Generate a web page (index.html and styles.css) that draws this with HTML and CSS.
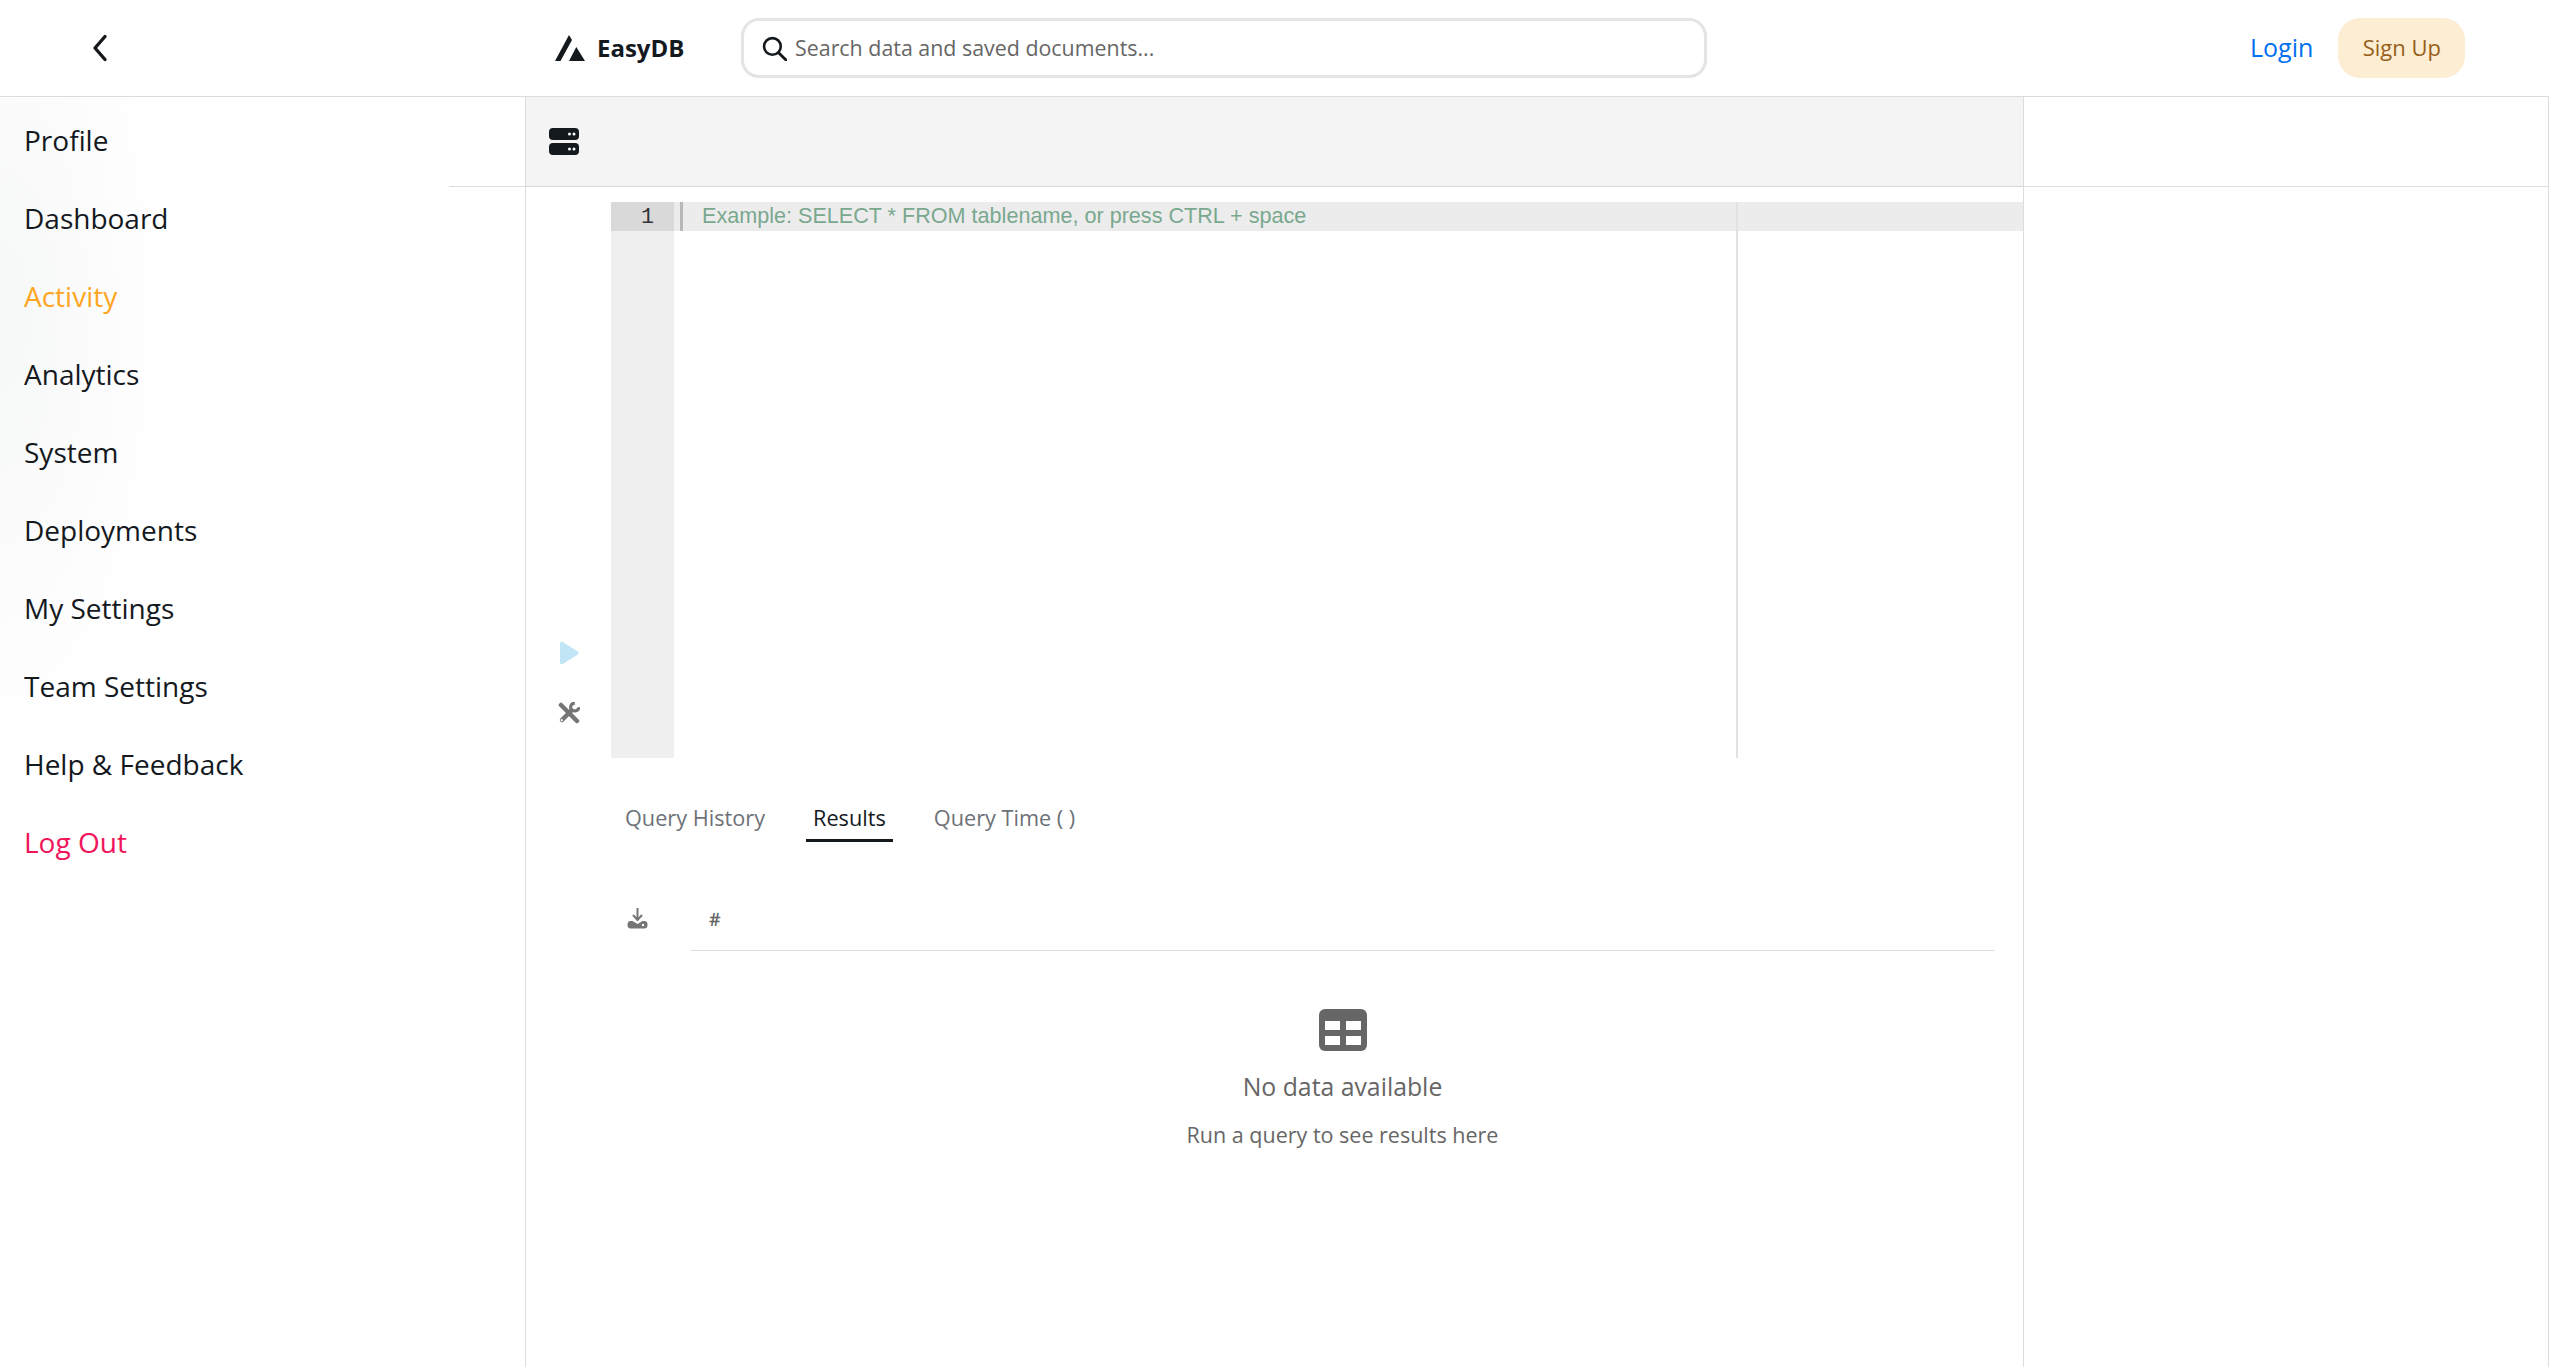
FILE: index.html
```html
<!DOCTYPE html>
<html lang="en">
<head>
<meta charset="utf-8">
<title>EasyDB</title>
<link rel="stylesheet" href="styles.css">
</head>
<body>
<div class="page">
  <header class="topbar">
    <div class="top-left">
      <svg class="back" viewBox="0 0 16 28" width="16" height="28"><path d="M13 2.500 3 14l10 11.500" fill="none" stroke="#14191e" stroke-width="3.400" stroke-linecap="round" stroke-linejoin="round"/></svg>
    </div>
    <div class="brand">
      <svg class="logo" viewBox="0 0 30 26" width="30" height="26"><path d="M14 0 0 26h5.500L17 5z M21.300 12 14 26h16z" fill="#14191e"/></svg>
      <span class="brand-name">EasyDB</span>
    </div>
    <div class="search">
      <svg class="search-icon" viewBox="0 0 24 24" width="25" height="25"><circle cx="10" cy="10" r="8" fill="none" stroke="#14191e" stroke-width="2.500"/><path d="m16 16 7 7" stroke="#14191e" stroke-width="2.800" stroke-linecap="round"/></svg>
      <span class="search-text">Search data and saved documents...</span>
    </div>
    <div class="auth">
      <a class="login">Login</a>
      <a class="signup">Sign Up</a>
    </div>
  </header>
  <div class="body">
    <nav class="sidebar">
      <a class="nav-item">Profile</a>
      <a class="nav-item">Dashboard</a>
      <a class="nav-item active">Activity</a>
      <a class="nav-item">Analytics</a>
      <a class="nav-item">System</a>
      <a class="nav-item">Deployments</a>
      <a class="nav-item">My Settings</a>
      <a class="nav-item">Team Settings</a>
      <a class="nav-item">Help &amp; Feedback</a>
      <a class="nav-item logout">Log Out</a>
    </nav>
    <main class="main">
      <div class="toolbar">
        <svg class="server" viewBox="0 0 30 27" width="30" height="27"><rect width="30" height="12" rx="4" fill="#14191e"/><rect y="15" width="30" height="12" rx="4" fill="#14191e"/><circle cx="20.500" cy="6" r="1.500" fill="#fff"/><circle cx="25" cy="6" r="1.500" fill="#fff"/><circle cx="20.500" cy="21" r="1.500" fill="#fff"/><circle cx="25" cy="21" r="1.500" fill="#fff"/></svg>
      </div>
      <section class="editor-row">
        <div class="rail">
          <svg viewBox="0 0 20 24" width="20" height="24"><path d="M1 2.500c0-1.500 1.500-2.300 2.800-1.600l14.700 9.400c1.300.8 1.300 2.600 0 3.400L3.800 23.100C2.500 23.800 1 23 1 21.500z" fill="#c1e5f5"/></svg>
          <svg viewBox="0 0 22 22" width="22" height="22"><path d="M3 3l16 16" fill="none" stroke="#757575" stroke-width="4.500" stroke-linecap="round"/><path d="M4 18 13.500 8.500" fill="none" stroke="#757575" stroke-width="4.500" stroke-linecap="round"/><path d="M16.800 1.300C13.500 1 12 4 13 7.500 16 10 20.800 9 20.800 5.200" fill="none" stroke="#757575" stroke-width="3.200"/><circle cx="3.800" cy="18.200" r="1.100" fill="#fff"/></svg>
        </div>
        <div class="editor">
          <div class="gutter"><div class="gutter-active">1</div></div>
          <div class="code">
            <div class="code-line"><span class="placeholder">Example: SELECT * FROM tablename, or press CTRL + space</span></div>
            <span class="cursor"></span>
            <span class="margin"></span>
          </div>
        </div>
      </section>
      <section class="results">
        <div class="tabs">
          <a class="tab">Query History</a>
          <a class="tab current">Results</a>
          <a class="tab">Query Time ( )</a>
        </div>
        <div class="table-row">
          <svg class="download" viewBox="0 0 20 21" width="21" height="21"><path d="M10 0v11M5.500 7l4.500 5 4.500-5" fill="none" stroke="#757575" stroke-width="2"/><path d="M3 13h2l5 3 5-3h2c2 0 3 1.500 3 3.500v.5c0 2-1 3.500-3 3.500H3c-2 0-3-1.500-3-3.500v-.5C0 14.500 1 13 3 13z" fill="#757575"/><circle cx="15.500" cy="17" r="1.200" fill="#fff"/></svg>
          <div class="table-head">#</div>
        </div>
        <div class="empty">
          <svg viewBox="0 0 48 42" width="48" height="42"><rect width="48" height="42" rx="6" fill="#666"/><rect x="6" y="12" width="15" height="9" fill="#fff"/><rect x="27" y="12" width="15" height="9" fill="#fff"/><rect x="6" y="27" width="15" height="9" fill="#fff"/><rect x="27" y="27" width="15" height="9" fill="#fff"/></svg>
          <p class="empty-title">No data available</p>
          <p class="empty-sub">Run a query to see results here</p>
        </div>
      </section>
    </main>
    <aside class="aside"><div class="aside-head"></div></aside>
  </div>
</div>
</body>
</html>
```
FILE: styles.css
```css
* { box-sizing: border-box; }
html, body { margin: 0; height: 100%; background: #fff; overflow: hidden; }
body { font-family: "Open Sans", "Noto Sans", sans-serif; color: #14191e; }
.page { height: 1367px; display: flex; flex-direction: column; }
.topbar { height: 97px; flex: none; display: flex; align-items: center; border-bottom: 1px solid #dcdcdc; }
.top-left { width: 555px; padding-left: 92px; display: flex; align-items: center; }
.brand { width: 186px; display: flex; align-items: center; gap: 12px; }
.logo { display: block; }
.brand-name { font-size: 24px; font-weight: 700; padding-bottom: 1px; }
.search { width: 966px; height: 60px; border: 3px solid #e4e4e4; border-radius: 18px; display: flex; align-items: center; gap: 8px; padding-left: 18px; }
.search-text { font-size: 21.400px; color: #666; padding-bottom: 2px; }
.auth { flex: 1; display: flex; align-items: center; padding-left: 543px; gap: 25px; }
.login { font-size: 25px; color: #0070f0; padding-bottom: 2px; }
.signup { width: 127px; height: 60px; border-radius: 22px; background: #fdedd3; color: #96601a; font-size: 22px; padding-bottom: 2px; display: flex; align-items: center; justify-content: center; }
.body { flex: 1; display: flex; min-height: 0; }
.sidebar { width: 525px; flex: none; padding: 4px 0 0 24px; display: flex; flex-direction: column; background: radial-gradient(ellipse 170px 440px at 0 220px, #f6f7f7 0%, #fff 100%); position: relative; }
.sidebar::after { content: ""; position: absolute; left: 449px; right: 0; top: 89px; border-top: 1px solid #dcdcdc; }
.nav-item { height: 78px; font-size: 28px; display: flex; align-items: center; }
.active { color: #fea623; }
.logout { color: #f0145a; }
.main { width: 1499px; flex: none; border-left: 1px solid #dcdcdc; border-right: 1px solid #dcdcdc; display: flex; flex-direction: column; }
.toolbar { height: 90px; flex: none; background: #f4f4f4; border-bottom: 1px solid #d6d6d6; display: flex; align-items: center; padding-left: 23px; }
.server { display: block; }
.editor-row { display: flex; padding-top: 15px; height: 571px; flex: none; }
.rail { width: 85px; flex: none; display: flex; flex-direction: column; align-items: center; justify-content: flex-end; gap: 37px; padding: 0 0 34px; }
.rail svg { display: block; }
.editor { flex: 1; display: flex; height: 556px; }
.gutter { width: 63px; flex: none; background: #efefef; }
.gutter-active { height: 29px; background: #d9d9d9; font-family: "Liberation Mono", monospace; font-size: 21.600px; color: #333; text-align: right; padding-right: 20px; line-height: 31px; }
.code { flex: 1; position: relative; }
.code-line { height: 29px; background: #ececec; padding-left: 28px; line-height: 27px; }
.placeholder { font-family: "Liberation Sans", sans-serif; font-size: 21.600px; color: #7aa88f; }
.cursor { position: absolute; left: 6px; top: 0; width: 3px; height: 29px; background: #b8b8b8; }
.margin { position: absolute; left: 1062px; top: 0; bottom: 0; width: 2px; background: #e2e2e2; }
.results { flex: 1; display: flex; flex-direction: column; padding-left: 99px; }
.tabs { display: flex; gap: 41px; padding: 42px 0 0; height: 84px; flex: none; }
.tab { font-size: 21.700px; color: #6d7178; height: 42px; padding-bottom: 4px; border-bottom: 3px solid transparent; display: flex; align-items: center; }
.tab.current { color: #14191e; border-bottom-color: #14191e; padding-left: 7px; padding-right: 7px; }
.table-row { display: flex; align-items: flex-end; height: 109px; flex: none; }
.download { display: block; margin: 0 43px 22px 2px; flex: none; }
.table-head { width: 1303px; height: 63px; border-bottom: 1px solid #dcdcdc; padding-left: 18px; font-size: 18px; color: #666; font-weight: 600; display: flex; align-items: center; }
.empty { width: 1303px; margin-left: 66px; display: flex; flex-direction: column; align-items: center; padding-top: 58px; color: #666; }
.empty svg { display: block; }
.empty-title { margin: 19px 0 0; font-size: 24.800px; line-height: 33px; }
.empty-sub { margin: 17px 0 0; font-size: 21.500px; line-height: 30px; }
.aside { flex: 1; border-right: 1px solid #dcdcdc; }
.aside-head { height: 90px; border-bottom: 1px solid #dcdcdc; }
```
